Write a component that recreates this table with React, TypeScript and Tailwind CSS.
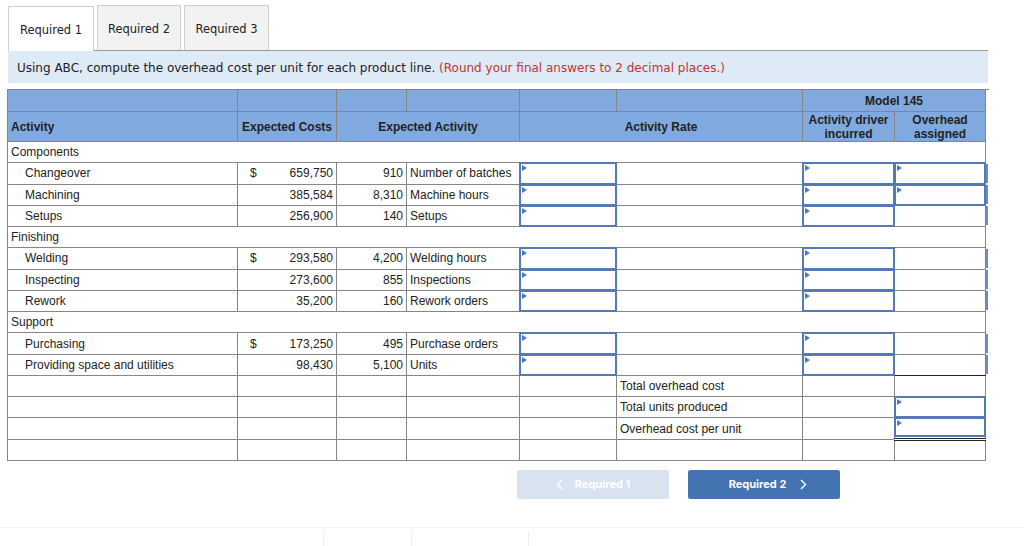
import React from 'react'

// ABC worksheet — Required 1

type Row =
  | { kind: 'section'; label: string }
  | {
      kind: 'item'
      name: string
      dollar?: boolean
      cost: string
      qty: string
      unit: string
      oh?: boolean
      underline?: boolean
    }
  | { kind: 'total'; label: string; oh?: boolean; double?: boolean }

const ROWS: Row[] = [
  { kind: 'section', label: 'Components' },
  { kind: 'item', name: 'Changeover', dollar: true, cost: '659,750', qty: '910', unit: 'Number of batches', oh: true },
  { kind: 'item', name: 'Machining', cost: '385,584', qty: '8,310', unit: 'Machine hours', oh: true },
  { kind: 'item', name: 'Setups', cost: '256,900', qty: '140', unit: 'Setups' },
  { kind: 'section', label: 'Finishing' },
  { kind: 'item', name: 'Welding', dollar: true, cost: '293,580', qty: '4,200', unit: 'Welding hours' },
  { kind: 'item', name: 'Inspecting', cost: '273,600', qty: '855', unit: 'Inspections' },
  { kind: 'item', name: 'Rework', cost: '35,200', qty: '160', unit: 'Rework orders' },
  { kind: 'section', label: 'Support' },
  { kind: 'item', name: 'Purchasing', dollar: true, cost: '173,250', qty: '495', unit: 'Purchase orders' },
  { kind: 'item', name: 'Providing space and utilities', cost: '98,430', qty: '5,100', unit: 'Units', underline: true },
  { kind: 'total', label: 'Total overhead cost' },
  { kind: 'total', label: 'Total units produced', oh: true },
  { kind: 'total', label: 'Overhead cost per unit', oh: true, double: true },
  { kind: 'total', label: '' },
]

const cell = 'border border-[#868686] h-[21.27px] p-0'

function InputBox({ double }: { double?: boolean }) {
  return (
    <div className={`absolute left-[-1px] right-[-1px] top-[-1px] ${double ? 'bottom-[1px]' : 'bottom-[-1px]'} border-2 border-[#5479b3] bg-white`}>
      <div className="absolute left-[1px] top-[1px] w-0 h-0 border-y-[3px] border-y-transparent border-l-[5px] border-l-[#4a78c2]" />
    </div>
  )
}

function InputCell({ double }: { double?: boolean }) {
  return (
    <td className={`${cell} relative ${double ? 'border-b-[3px] border-b-[#222] border-double' : ''}`}>
      <InputBox double={double} />
    </td>
  )
}

function Sliver({ blue }: { blue?: boolean }) {
  return (
    <td className="p-0 border-0">
      {blue && <div className="w-[2px] h-[19px] bg-[#6a8cc6]" />}
    </td>
  )
}

export default function App() {
  return (
    <div className="w-[1024px] h-[546px] bg-white overflow-hidden text-[#222]" style={{ fontFamily: '"Liberation Sans", Arial, sans-serif' }}>
      {/* tabs */}
      <div className="pt-[6px] pl-[8px] pr-[36px]" style={{ fontFamily: '"DejaVu Sans", Verdana, sans-serif' }}>
        <div className="flex items-end">
          <div className="w-[86px] h-[45px] border border-b-0 border-[#cfcfcf] bg-white flex items-center justify-center pt-[3px] text-[11.5px] text-[#222]">
            Required 1
          </div>
          <div className="flex-1 flex items-end border-b border-[#9a9a9a] h-[45px]">
            <div className="ml-[3px] w-[84px] h-[45px] border border-b-0 border-[#cfcfcf] bg-[#f2f2f2] flex items-center justify-center pt-[3px] text-[11.5px]">
              Required 2
            </div>
            <div className="ml-[3px] w-[85px] h-[45px] border border-b-0 border-[#cfcfcf] bg-[#f2f2f2] flex items-center justify-center pt-[3px] text-[11.5px]">
              Required 3
            </div>
          </div>
        </div>
        <div className="h-[32px] bg-[#dfeaf7] flex items-center pl-[9px] pt-[1px] text-[12px] text-[#222]">
          Using ABC, compute the overhead cost per unit for each product line.&nbsp;
          <span className="text-[#c4342d]">(Round your final answers to 2 decimal places.)</span>
        </div>
      </div>

      {/* table */}
      <div className="pl-[7px] pt-[6px]">
        <table className="table-fixed border-collapse text-[12px] leading-[14px] w-[981px]">
          <colgroup>
            <col className="w-[230px]" />
            <col className="w-[99px]" />
            <col className="w-[70px]" />
            <col className="w-[113px]" />
            <col className="w-[97px]" />
            <col className="w-[186px]" />
            <col className="w-[92px]" />
            <col className="w-[91px]" />
            <col className="w-[3px]" />
          </colgroup>
          <thead className="font-bold">
            <tr className="bg-[#80aadf]">
              <td className={`${cell} h-[22px]`} />
              <td className={`${cell} h-[22px]`} />
              <td className={`${cell} h-[22px]`} />
              <td className={`${cell} h-[22px]`} />
              <td className={`${cell} h-[22px]`} />
              <td className={`${cell} h-[22px]`} />
              <td colSpan={2} className={`${cell} h-[22px] text-center`}>Model 145</td>
              <td className="p-0 border-t border-[#868686] bg-white" />
            </tr>
            <tr className="bg-[#80aadf]">
              <td className={`${cell} h-[30px] pl-[3px]`}>Activity</td>
              <td className={`${cell} h-[30px] text-center`}>Expected Costs</td>
              <td colSpan={2} className={`${cell} h-[30px] text-center`}>Expected Activity</td>
              <td colSpan={2} className={`${cell} h-[30px] text-center`}>Activity Rate</td>
              <td className={`${cell} h-[30px] text-center`}>Activity driver<br />incurred</td>
              <td className={`${cell} h-[30px] text-center`}>Overhead<br />assigned</td>
              <td className="p-0 bg-white" />
            </tr>
          </thead>
          <tbody>
            {ROWS.map((r, i) => {
              if (r.kind === 'section') {
                return (
                  <tr key={i}>
                    <td colSpan={8} className={`${cell} pl-[3px]`}>{r.label}</td>
                    <Sliver />
                  </tr>
                )
              }
              if (r.kind === 'item') {
                return (
                  <tr key={i}>
                    <td className={`${cell} pl-[17px]`}>{r.name}</td>
                    <td className={cell}>
                      <div className="flex justify-between pl-[12px] pr-[3px]">
                        <span>{r.dollar ? '$' : ''}</span>
                        <span>{r.cost}</span>
                      </div>
                    </td>
                    <td className={`${cell} text-right pr-[3px]`}>{r.qty}</td>
                    <td className={`${cell} pl-[3px]`}>{r.unit}</td>
                    <InputCell />
                    <td className={cell} />
                    <InputCell />
                    {r.oh ? (
                      <InputCell />
                    ) : (
                      <td className={`${cell} ${r.underline ? 'border-b-[#222]' : ''}`} />
                    )}
                    <Sliver blue />
                  </tr>
                )
              }
              return (
                <tr key={i}>
                  <td className={cell} />
                  <td className={cell} />
                  <td className={cell} />
                  <td className={cell} />
                  <td className={cell} />
                  <td className={`${cell} pl-[3px]`}>{r.label}</td>
                  <td className={cell} />
                  {r.oh ? <InputCell double={r.double} /> : <td className={cell} />}
                  <Sliver />
                </tr>
              )
            })}
          </tbody>
        </table>
      </div>

      {/* nav buttons */}
      <div className="flex gap-[19px] pl-[517px] pt-[9px]" style={{ fontFamily: 'Inter, Roboto, sans-serif' }}>
        <div className="w-[152px] h-[29px] rounded-[2px] bg-[#d9e3ef] flex items-center justify-center gap-[12px] text-white text-[11px] font-bold">
          <svg width="7" height="11" viewBox="0 0 7 11" fill="none" stroke="white" strokeWidth="1.4">
            <path d="M6 1 L1.5 5.5 L6 10" />
          </svg>
          <span>Required 1</span>
        </div>
        <div className="w-[152px] h-[29px] rounded-[2px] bg-[#4473b1] flex items-center justify-center gap-[14px] text-white text-[11px] font-bold pl-[8px]">
          <span>Required 2</span>
          <svg width="7" height="11" viewBox="0 0 7 11" fill="none" stroke="white" strokeWidth="1.4">
            <path d="M1 1 L5.5 5.5 L1 10" />
          </svg>
        </div>
      </div>

      {/* faint footer */}
      <div className="mt-[28px] border-t border-[#f3f3f3] h-[20px] flex">
        <div className="ml-[323px] mt-[3px] h-[17px] border-l border-[#eeeeee]" />
        <div className="ml-[87px] mt-[3px] h-[17px] border-l border-[#eeeeee]" />
        <div className="ml-[116px] mt-[3px] h-[17px] border-l border-[#eeeeee]" />
      </div>
    </div>
  )
}
